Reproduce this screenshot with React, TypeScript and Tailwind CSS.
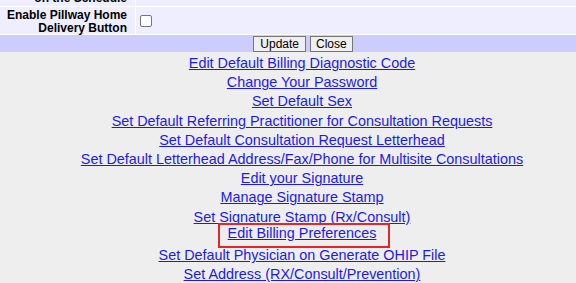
const links = [
  'Edit Default Billing Diagnostic Code',
  'Change Your Password',
  'Set Default Sex',
  'Set Default Referring Practitioner for Consultation Requests',
  'Set Default Consultation Request Letterhead',
  'Set Default Letterhead Address/Fax/Phone for Multisite Consultations',
  'Edit your Signature',
  'Manage Signature Stamp',
  'Set Signature Stamp (Rx/Consult)',
  'Edit Billing Preferences',
  'Set Default Physician on Generate OHIP File',
  'Set Address (RX/Consult/Prevention)',
];

export default function App() {
  return (
    <div
      className="w-[576px] h-[283px] overflow-hidden bg-[#eeeeee]"
      style={{ fontFamily: "'Liberation Sans', Arial, sans-serif" }}
    >
      {/* preferences table (scrolled, first row cut off) */}
      <div className="w-[606px] -mt-[22px]">
        <div className="flex border-b border-white">
          <div className="w-[136px] h-[28px] bg-[#eeeeff] border-r border-white pr-2 text-right text-[12px] font-bold leading-[12.5px] text-black pt-[1px]">
            Show Consult Flag
            <br />
            on the Schedule
          </div>
          <div className="flex-1 bg-[#eeeeff]" />
        </div>
        <div className="flex border-b border-white">
          <div className="w-[136px] h-[27px] bg-[#eeeeff] border-r border-white pr-2 pt-[2px] text-right text-[12px] font-bold leading-[12.5px] text-black">
            Enable Pillway Home
            <br />
            Delivery Button
          </div>
          <div className="flex-1 bg-[#eeeeff] pl-1 pt-[8px]">
            <div className="w-[12px] h-[12px] rounded-[2px] border border-[#767676] bg-white" />
          </div>
        </div>
        <div className="h-[17px] bg-[#ccccff] flex justify-center items-center gap-1">
          <button className="h-[16px] px-[6px] text-[12px] leading-none border border-[#767676] bg-[#efefef] text-black">
            Update
          </button>
          <button className="h-[16px] px-[5px] text-[12px] leading-none border border-[#767676] bg-[#efefef] text-black">
            Close
          </button>
        </div>
      </div>

      {/* settings links */}
      <div className="w-[604px] pt-[2px] flex flex-col items-center text-[14.4px] leading-[19.2px]">
        {links.map((l) =>
          l === 'Edit Billing Preferences' ? (
            <span key={l} className="relative -mt-[3px] mb-[3px]">
              <a href="#" className="text-[#1a1aee] underline">
                {l}
              </a>
              <span className="absolute -left-[10px] -right-[14px] -top-[1px] -bottom-[5px] border-2 border-[#e3262b]" />
            </span>
          ) : (
            <a key={l} href="#" className="text-[#1a1aee] underline">
              {l}
            </a>
          ),
        )}
      </div>
    </div>
  );
}
